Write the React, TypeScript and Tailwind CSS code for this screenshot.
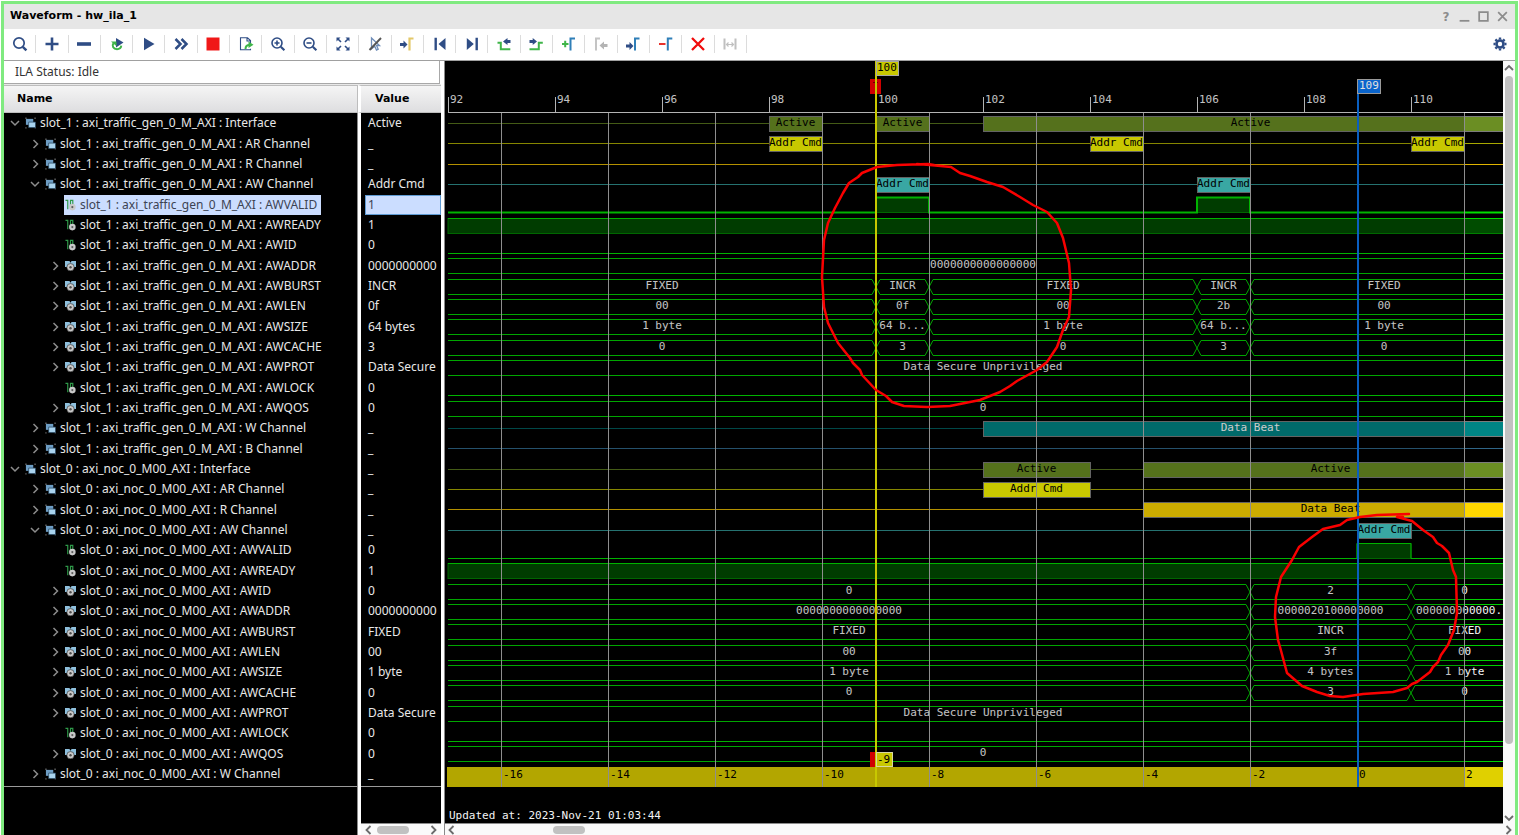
import { ReactNode } from 'react';
import clsx from 'clsx';

type RowKind = 'group' | 'bit' | 'bus';

interface SignalRow {
  name: string;
  value: string;
  kind: RowKind;
  level: 0 | 1 | 2;
  open?: boolean;
  selected?: boolean;
}

const S1 = 'slot_1 : axi_traffic_gen_0_M_AXI : ';
const S0 = 'slot_0 : axi_noc_0_M00_AXI : ';

const ROWS: SignalRow[] = [
  { name: S1 + 'Interface', value: 'Active', kind: 'group', level: 0, open: true },
  { name: S1 + 'AR Channel', value: '_', kind: 'group', level: 1 },
  { name: S1 + 'R Channel', value: '_', kind: 'group', level: 1 },
  { name: S1 + 'AW Channel', value: 'Addr Cmd', kind: 'group', level: 1, open: true },
  { name: S1 + 'AWVALID', value: '1', kind: 'bit', level: 2, selected: true },
  { name: S1 + 'AWREADY', value: '1', kind: 'bit', level: 2 },
  { name: S1 + 'AWID', value: '0', kind: 'bit', level: 2 },
  { name: S1 + 'AWADDR', value: '0000000000', kind: 'bus', level: 2 },
  { name: S1 + 'AWBURST', value: 'INCR', kind: 'bus', level: 2 },
  { name: S1 + 'AWLEN', value: '0f', kind: 'bus', level: 2 },
  { name: S1 + 'AWSIZE', value: '64 bytes', kind: 'bus', level: 2 },
  { name: S1 + 'AWCACHE', value: '3', kind: 'bus', level: 2 },
  { name: S1 + 'AWPROT', value: 'Data Secure', kind: 'bus', level: 2 },
  { name: S1 + 'AWLOCK', value: '0', kind: 'bit', level: 2 },
  { name: S1 + 'AWQOS', value: '0', kind: 'bus', level: 2 },
  { name: S1 + 'W Channel', value: '_', kind: 'group', level: 1 },
  { name: S1 + 'B Channel', value: '_', kind: 'group', level: 1 },
  { name: S0 + 'Interface', value: '_', kind: 'group', level: 0, open: true },
  { name: S0 + 'AR Channel', value: '_', kind: 'group', level: 1 },
  { name: S0 + 'R Channel', value: '_', kind: 'group', level: 1 },
  { name: S0 + 'AW Channel', value: '_', kind: 'group', level: 1, open: true },
  { name: S0 + 'AWVALID', value: '0', kind: 'bit', level: 2 },
  { name: S0 + 'AWREADY', value: '1', kind: 'bit', level: 2 },
  { name: S0 + 'AWID', value: '0', kind: 'bus', level: 2 },
  { name: S0 + 'AWADDR', value: '0000000000', kind: 'bus', level: 2 },
  { name: S0 + 'AWBURST', value: 'FIXED', kind: 'bus', level: 2 },
  { name: S0 + 'AWLEN', value: '00', kind: 'bus', level: 2 },
  { name: S0 + 'AWSIZE', value: '1 byte', kind: 'bus', level: 2 },
  { name: S0 + 'AWCACHE', value: '0', kind: 'bus', level: 2 },
  { name: S0 + 'AWPROT', value: 'Data Secure', kind: 'bus', level: 2 },
  { name: S0 + 'AWLOCK', value: '0', kind: 'bit', level: 2 },
  { name: S0 + 'AWQOS', value: '0', kind: 'bus', level: 2 },
  { name: S0 + 'W Channel', value: '_', kind: 'group', level: 1 },
];

const NAVY = '#2f4d85';
const GREEN = '#3fb549';
const BLUE = '#2f7fb8';

const TOOLS: { label: string; icon: ReactNode }[] = [
  {
    label: 'Search',
    icon: (
      <g fill="none" stroke={NAVY} strokeWidth="1.7">
        <circle cx="7" cy="7" r="5.2" />
        <path d="M10.8 10.8l3.6 3.6" strokeWidth="2.4" />
      </g>
    ),
  },
  { label: 'Add', icon: <path d="M8 1.5v13M1.5 8h13" stroke={NAVY} strokeWidth="2.6" /> },
  { label: 'Remove', icon: <path d="M1 8h14" stroke={NAVY} strokeWidth="3.6" /> },
  {
    label: 'Restart trigger',
    icon: (
      <g>
        <path d="M7 2v9.500l7.500-5z" fill={NAVY} />
        <path d="M4.500 7C2.500 10 4.500 13.200 8 13.200c2.600 0 4-1.500 4.300-3.500" fill="none" stroke={GREEN} strokeWidth="2" />
        <path d="M2 5.500h5.500v4.800z" fill={GREEN} />
      </g>
    ),
  },
  { label: 'Run trigger', icon: <path d="M3 1.8v12.400l10.500-6.200z" fill={NAVY} /> },
  {
    label: 'Run trigger immediate',
    icon: <path d="M2.500 3l5 5-5 5M8.500 3l5 5-5 5" fill="none" stroke={NAVY} strokeWidth="2.5" />,
  },
  { label: 'Stop trigger', icon: <path d="M1.500 1.500h13v13h-13z" fill="#f01818" /> },
  {
    label: 'Export data',
    icon: (
      <g fill="none">
        <path d="M12.500 7V4.500L9.500 1.800h-7v12h10v-1M9 2v3h3.500" stroke={NAVY} strokeWidth="1.1" />
        <path d="M7.500 13c0-3 1.500-4 4-4" stroke={GREEN} strokeWidth="2" />
        <path d="M10.500 5.500v6.500l5-3.200z" fill={GREEN} />
      </g>
    ),
  },
  {
    label: 'Zoom in',
    icon: (
      <g fill="none" stroke={NAVY} strokeWidth="1.6">
        <circle cx="7" cy="7" r="5" />
        <path d="M10.800 10.800l3.600 3.400" strokeWidth="2.2" />
        <path d="M4.500 7h5M7 4.500v5" />
      </g>
    ),
  },
  {
    label: 'Zoom out',
    icon: (
      <g fill="none" stroke={NAVY} strokeWidth="1.6">
        <circle cx="7" cy="7" r="5" />
        <path d="M10.800 10.800l3.600 3.400" strokeWidth="2.2" />
        <path d="M4.500 7h5" />
      </g>
    ),
  },
  {
    label: 'Zoom fit',
    icon: (
      <g fill={NAVY} stroke={NAVY} strokeWidth="1.6">
        <path d="M3 3l3 3M13 3l-3 3M3 13l3-3M13 13l-3-3" />
        <path d="M1.500 1.500h4l-4 4zM14.500 1.500h-4l4 4zM1.500 14.500h4l-4-4zM14.500 14.500h-4l4-4z" stroke="none" />
      </g>
    ),
  },
  {
    label: 'Zoom to cursor',
    icon: (
      <g fill="none">
        <path d="M4.500 2l8 7.500H9.500l1.700 3.800-1.700.8-1.800-3.900-3.200 2.600z" stroke="#6f8db8" strokeWidth="1.3" />
        <path d="M14 2L2.500 14" stroke="#555" strokeWidth="1.9" />
      </g>
    ),
  },
  {
    label: 'Go to cursor',
    icon: (
      <g>
        <path d="M1 7h3.500V4.500l4 4-4 4V10H1z" fill={NAVY} />
        <path d="M10.500 14.500v-12h4" fill="none" stroke="#e3c869" strokeWidth="2.2" />
      </g>
    ),
  },
  {
    label: 'Go to time 0',
    icon: <path d="M2.500 1.800h2.400v12.400H2.500zM13.500 2v12L6.500 8z" fill={NAVY} />,
  },
  {
    label: 'Go to last time',
    icon: <path d="M11.500 1.800h2.400v12.400h-2.400zM2.800 2v12l7-6z" fill={NAVY} />,
  },
  {
    label: 'Previous transition',
    icon: (
      <g>
        <path d="M1.500 6.800h3.300v6.500h9.500" fill="none" stroke={GREEN} strokeWidth="2" />
        <path d="M14.500 4h-3V2L7 5.500l4.500 3.500V7h3z" fill={NAVY} />
      </g>
    ),
  },
  {
    label: 'Next transition',
    icon: (
      <g>
        <path d="M1.500 13.300h9.300V6.800h4" fill="none" stroke={GREEN} strokeWidth="2" />
        <path d="M1.500 4h3.200V2L9 5.500 4.700 9V7H1.500z" fill={NAVY} />
      </g>
    ),
  },
  {
    label: 'Add marker',
    icon: (
      <g fill="none" strokeWidth="2">
        <path d="M1 8h6.500M4.200 4.800v6.400" stroke={GREEN} />
        <path d="M9.500 14.500V2.500h4.500" stroke={BLUE} />
      </g>
    ),
  },
  {
    label: 'Previous marker',
    icon: (
      <g>
        <path d="M3 14.500V2.500h4" fill="none" stroke="#c4c4c4" strokeWidth="2" />
        <path d="M14.500 8h-3.500V5.500l-4.500 4 4.500 4V11h3.500z" fill="#b4b4b4" />
      </g>
    ),
  },
  {
    label: 'Next marker',
    icon: (
      <g>
        <path d="M1 8.500h3.500V6l4 4-4 4v-2.500H1z" fill={NAVY} />
        <path d="M10 14.500v-12h4.500" fill="none" stroke={BLUE} strokeWidth="2" />
      </g>
    ),
  },
  {
    label: 'Delete marker',
    icon: (
      <g fill="none" strokeWidth="2">
        <path d="M1 8h6.500" stroke="#e8322c" />
        <path d="M9.800 14.500V2.500h4.500" stroke={BLUE} />
      </g>
    ),
  },
  {
    label: 'Delete all markers',
    icon: <path d="M2 2l12 12M14 2L2 14" stroke="#f00b0b" strokeWidth="2.3" />,
  },
  {
    label: 'Swap cursors',
    icon: (
      <g fill="none" stroke="#c0c0c0">
        <path d="M2.500 2.500v11M13.500 2.500v11" strokeWidth="2" />
        <path d="M4.500 8.500h7M6.500 6.500l-2 2 2 2M9.500 6.500l2 2-2 2" strokeWidth="1.2" />
      </g>
    ),
  },
];

const Arrow = ({ d }: { d: string }) => (
  <svg viewBox="0 0 12 12" className="size-3 shrink-0" fill="none" stroke="#6b6b6b" strokeWidth="1.8">
    <path d={d} />
  </svg>
);

const LEFT = 'M8.500 2L4.500 6 8.500 10';
const RIGHT = 'M3.500 2L7.500 6 3.500 10';
const UP = 'M2 8L6 4 10 8';
const DOWN = 'M2 4L6 8 10 4';

const RowIcon = ({ kind }: { kind: RowKind }) => (
  <svg viewBox="0 0 12 12" className="h-3 w-[11px] shrink-0">
    {kind === 'group' && (
      <g>
        <path d="M0 0h2v1.500H0zM10 0h2v1.500h-2zM0 10.500h2V12H0zM10.500 10.500H12V12h-1.500z" fill="#4b4b4b" />
        <path d="M1 1.500h8v6.500H1z" fill="#6d9dc4" />
        <path d="M4 5h7.500v6H4z" fill="#a9d3ee" stroke="#27455e" strokeWidth=".8" />
      </g>
    )}
    {kind === 'bit' && (
      <g>
        <path d="M.5 1h2.500v9.500M6 8V1h2.500v4" fill="none" stroke="#2f9a49" strokeWidth="1.3" />
        <circle cx="8" cy="8.300" r="3.600" fill="#c9c9c9" />
        <circle cx="8" cy="8.300" r="1.200" fill="#5d5d5d" />
      </g>
    )}
    {kind === 'bus' && (
      <g>
        <path d="M0 .5h4.800L6 2.500 7.200 .5H12v6.500H0z" fill="#8fc0dd" />
        <circle cx="6" cy="7.300" r="4" fill="#c9c9c9" stroke="#1b1b1b" strokeWidth=".6" />
        <circle cx="6" cy="7.300" r="1.300" fill="#4f4f4f" />
      </g>
    )}
  </svg>
);

const INDENT = ['pl-1.5', 'pl-[26px]', 'pl-[46px]'];

const SignalTable = () => (
  <table className="w-full table-fixed border-separate border-spacing-0 bg-black text-xs text-[#e8e8e8]">
    <colgroup>
      <col />
      <col className="w-[83px]" />
    </colgroup>
    <thead>
      <tr className="h-7 text-left font-['DejaVu_Sans'] text-[11px] text-black">
        <th className="border-t border-r border-b border-[#bdbdbd] bg-linear-to-b from-[#f5f5f5] to-[#dedee0] p-0 pl-[13px]">
          Name
        </th>
        <th className="border-t border-b border-l-[3px] border-t-[#bdbdbd] border-b-[#bdbdbd] border-l-white bg-linear-to-b from-[#f5f5f5] to-[#dedee0] bg-clip-padding p-0 pl-3.5">
          Value
        </th>
      </tr>
    </thead>
    <tbody>
      {ROWS.map((row, i) => (
        <tr key={row.name} className={i % 3 === 1 ? 'h-[21px]' : 'h-5'}>
          <td className="overflow-hidden border-r border-[#8a8a8a] p-0">
            <div className={clsx('flex h-5 items-center whitespace-nowrap', INDENT[row.level])}>
              {row.kind === 'bit' ? (
                <span className="w-3.5" />
              ) : (
                <button type="button" aria-label={row.open ? 'Collapse' : 'Expand'} className="w-3.5">
                  <svg viewBox="0 0 10 10" className="size-2.5" fill="none" stroke="#8d8d8d" strokeWidth="1.5">
                    <path d={row.open ? 'M1 3l4 4 4-4' : 'M3.500 1l4 4-4 4'} />
                  </svg>
                </button>
              )}
              <span
                className={clsx('flex h-5 items-center gap-1 pl-px', row.selected && 'bg-[#cbddff] pr-1 text-[#3c4353]')}
              >
                <RowIcon kind={row.kind} />
                {row.name}
              </span>
            </div>
          </td>
          <td className="border-l-[3px] border-white p-0">
            <div
              className={clsx(
                'ml-1 flex h-5 items-center overflow-hidden border whitespace-nowrap pl-0.5',
                row.selected ? 'border-[#5f9bd3] bg-[#cbddff] text-[#3c4353]' : 'border-transparent',
              )}
            >
              {row.value}
            </div>
          </td>
        </tr>
      ))}
    </tbody>
  </table>
);

// ---- waveform ----

const CYCLE = 53.5;
const FIRST = 92;
const LAST = 112;
const FAR = 4000;
const DIM_END = 111;
const RULER_Y = 51;
const CHAR_W = 6.62;

const px = (n: number) => Math.floor(3 + (n - FIRST) * CYCLE);
const endPx = (n: number) => (n >= LAST ? FAR : px(n));
const rowTop = (i: number) => 52 + 20 * i + Math.floor((i + 1) / 3);

const labelX = (from: number, to: number, label: string) =>
  to >= LAST ? Math.min((px(from) + px(to)) / 2, 1057 - (label.length > 12 && from > 100 ? 43 : 0)) : (px(from) + px(to)) / 2;

type Segment = [from: number, to: number, label: string];

const IDLE: { row: number; color: string }[] = [
  { row: 0, color: '#56721c' },
  { row: 1, color: '#a8a800' },
  { row: 2, color: '#e0b400' },
  { row: 3, color: '#2f8f8c' },
  { row: 15, color: '#005a5a' },
  { row: 16, color: '#2f6688' },
  { row: 17, color: '#56721c' },
  { row: 18, color: '#a8a800' },
  { row: 19, color: '#e0b400' },
  { row: 20, color: '#2f8f8c' },
];

const BARS: { row: number; fill: string; text: string; segs: Segment[] }[] = [
  { row: 0, fill: '#6b8e23', text: '#000', segs: [[98, 99, 'Active'], [100, 101, 'Active'], [102, 112, 'Active']] },
  { row: 1, fill: '#fafa00', text: '#000', segs: [[98, 99, 'Addr Cmd'], [104, 105, 'Addr Cmd'], [110, 111, 'Addr Cmd']] },
  { row: 3, fill: '#48d1cc', text: '#000', segs: [[100, 101, 'Addr Cmd'], [106, 107, 'Addr Cmd']] },
  { row: 15, fill: '#008585', text: '#fff', segs: [[102, 112, 'Data Beat']] },
  { row: 17, fill: '#6b8e23', text: '#000', segs: [[102, 104, 'Active'], [105, 112, 'Active']] },
  { row: 18, fill: '#fafa00', text: '#000', segs: [[102, 104, 'Addr Cmd']] },
  { row: 19, fill: '#ffd700', text: '#000', segs: [[105, 112, 'Data Beat']] },
  { row: 20, fill: '#48d1cc', text: '#000', segs: [[109, 110, 'Addr Cmd']] },
];

const BUSES: { row: number; segs: Segment[] }[] = [
  { row: 7, segs: [[92, 112, '0000000000000000']] },
  { row: 8, segs: [[92, 100, 'FIXED'], [100, 101, 'INCR'], [101, 106, 'FIXED'], [106, 107, 'INCR'], [107, 112, 'FIXED']] },
  { row: 9, segs: [[92, 100, '00'], [100, 101, '0f'], [101, 106, '00'], [106, 107, '2b'], [107, 112, '00']] },
  {
    row: 10,
    segs: [[92, 100, '1 byte'], [100, 101, '64 b...'], [101, 106, '1 byte'], [106, 107, '64 b...'], [107, 112, '1 byte']],
  },
  { row: 11, segs: [[92, 100, '0'], [100, 101, '3'], [101, 106, '0'], [106, 107, '3'], [107, 112, '0']] },
  { row: 12, segs: [[92, 112, 'Data Secure Unprivileged']] },
  { row: 14, segs: [[92, 112, '0']] },
  { row: 23, segs: [[92, 107, '0'], [107, 110, '2'], [110, 112, '0']] },
  { row: 24, segs: [[92, 107, '0000000000000000'], [107, 110, '0000020100000000'], [110, 112, '000000000000.']] },
  { row: 25, segs: [[92, 107, 'FIXED'], [107, 110, 'INCR'], [110, 112, 'FIXED']] },
  { row: 26, segs: [[92, 107, '00'], [107, 110, '3f'], [110, 112, '00']] },
  { row: 27, segs: [[92, 107, '1 byte'], [107, 110, '4 bytes'], [110, 112, '1 byte']] },
  { row: 28, segs: [[92, 107, '0'], [107, 110, '3'], [110, 112, '0']] },
  { row: 29, segs: [[92, 112, 'Data Secure Unprivileged']] },
  { row: 31, segs: [[92, 112, '0']] },
];

const BITS: { row: number; width: number; high: [number, number][] }[] = [
  { row: 4, width: 2, high: [[100, 101], [106, 107]] },
  { row: 5, width: 1, high: [[92, 112]] },
  { row: 6, width: 1, high: [] },
  { row: 13, width: 1, high: [] },
  { row: 21, width: 1, high: [[109, 110]] },
  { row: 22, width: 1, high: [[92, 112]] },
  { row: 30, width: 1, high: [] },
];

const range = (from: number, to: number) =>
  Array.from({ length: (to - from) / 2 + 1 }, (_, i) => from + i * 2);

const Bus = ({ row, segs }: { row: number; segs: Segment[] }) => {
  const top = rowTop(row) + 3.5;
  const low = top + 15;
  return (
    <g>
      {segs.map(([from, to, label], i) => {
        const a = px(from) + (i > 0 ? 4 : 0);
        const b = to >= LAST ? FAR : px(to) - 4;
        return (
          <g key={from}>
            <path d={`M${a} ${top}H${b}M${a} ${low}H${b}`} stroke="#00d000" />
            {i > 0 && (
              <path d={`M${a} ${top}L${a - 8} ${low}M${a - 8} ${top}L${a} ${low}`} stroke="#00d000" />
            )}
            <text x={labelX(from, to, label)} y={top + 9} textAnchor="middle" fill="#f4f4f4">
              {label}
            </text>
          </g>
        );
      })}
    </g>
  );
};

const Bit = ({ row, width, high }: { row: number; width: number; high: [number, number][] }) => {
  const top = rowTop(row) + 3.5;
  const low = top + 15;
  const edges = high.map(([a, b]) => `H${px(a)}V${top}H${endPx(b)}V${low}`).join('');
  return (
    <g>
      {high.map(([a, b]) => (
        <rect key={a} x={px(a)} y={top} width={endPx(b) - px(a)} height={15} fill="#004c00" stroke="#008000" />
      ))}
      <path
        d={high[0]?.[0] === FIRST ? `M3 ${top}H${FAR}` : `M3 ${low}${edges}H${FAR}`}
        fill="none"
        stroke="#00e000"
        strokeWidth={width}
      />
    </g>
  );
};

const Waveform = () => (
  <svg
    role="img"
    aria-label="Captured waveform"
    className="h-full w-full bg-black font-['DejaVu_Sans_Mono',monospace] text-[11px]"
  >
    {range(92, 110).map((n) => (
      <g key={n}>
        <path d={`M${px(n) + 0.5} ${RULER_Y - 15}v15`} stroke="#e0e0e0" />
        <text x={px(n) + 2} y={RULER_Y - 9} fill="#f4f4f4">
          {n}
        </text>
      </g>
    ))}
    <path d={`M3 ${RULER_Y + 0.5}H${FAR}`} stroke="#e0e0e0" />

    {IDLE.map(({ row, color }) => (
      <path key={row} d={`M3 ${rowTop(row) + 10.5}H${FAR}`} stroke={color} />
    ))}
    {BITS.map((bit) => (
      <Bit key={bit.row} {...bit} />
    ))}
    {BUSES.map((bus) => (
      <Bus key={bus.row} {...bus} />
    ))}
    {BARS.map(({ row, fill, text, segs }) =>
      segs.map(([from, to, label]) => (
        <g key={`${row}-${from}`}>
          <rect
            x={px(from) + 0.5}
            y={rowTop(row) + 3.5}
            width={endPx(to) - px(from)}
            height={15}
            fill={fill}
            stroke="#7c7c7c"
          />
          <text x={(px(from) + px(to)) / 2} y={rowTop(row) + 13} textAnchor="middle" fill={text}>
            {label}
          </text>
        </g>
      )),
    )}

    {/* ruler relative to the trigger */}
    <rect x="2" y="706" width={FAR} height="20" fill="#e0d000" />

    {/* samples before the window end are shown dimmed */}
    <rect x="0" y="0" width={px(DIM_END)} height="726" fill="#000" opacity="0.2" />

    {range(-16, 2).map((n) => (
      <g key={n}>
        <path d={`M${px(n + 109) + 0.5} ${RULER_Y + 1}V726`} stroke="#8e8e8e" />
        <text x={px(n + 109) + 2} y="717" fill="#000">
          {n}
        </text>
      </g>
    ))}

    {/* trigger flags */}
    <path d="M425 18h11v15h-11zM425 691h6v15h-6z" fill="#d00000" />
    <path d="M428 21.500h5" stroke="#600" />
    <path d="M431 0V726" stroke="#c8c800" strokeWidth="2" />
    <rect x="431.5" y="0.5" width="22" height="14" fill="#c8c800" stroke="#a8a8a8" />
    <text x="432" y="10" fill="#000">
      100
    </text>
    <rect x="431.5" y="691.5" width="16" height="14" fill="#c8c800" stroke="#d8d8a0" />
    <text x="432" y="702" fill="#000">
      -9
    </text>
    <path d="M913 18V726" stroke="#0a5fc0" strokeWidth="2" />
    <rect x="912.5" y="18.5" width="23" height="14" fill="#0a64cc" stroke="#9a9a9a" />
    <text x="914" y="28" fill="#e0e0e0">
      109
    </text>

    <text x="4" y="758" fill="#f4f4f4">
      Updated at: 2023-Nov-21 01:03:44
    </text>

    {/* hand-drawn review marks */}
    <g
      transform="translate(-445 -61)"
      fill="none"
      stroke="#fa0000"
      strokeWidth="2.5"
      strokeLinejoin="round"
      strokeLinecap="round"
    >
      <path d="M934 165L928 164 897 165 877 167 862 173 858 177 849 183 843 193 835 208 828 223 824 240 822 277 824 307 828 323 838 343 850 358 853 363 860 370 862 375 876 390 886 396 892 402 904 406 927 407 950 406 980 400 1000 392 1010 386 1017 381 1037 370 1047 362 1057 347 1063 330 1069 317 1071 290 1069 263 1063 238 1057 223 1047 212 1033 205 1020 197 1003 187 987 182 970 176 960 173 951 167 930 165 917 164" />
      <path d="M1409 514L1377 515 1360 517 1347 520 1340 525 1323 529 1312 537 1299 547 1292 560 1281 577 1276 597 1275 617 1278 640 1280 647 1287 673 1302 686 1317 692 1330 696 1343 697 1363 694 1393 692 1407 688 1412 684 1417 682 1430 672 1433 667 1438 662 1441 655 1448 645 1454 630 1457 613 1456 577 1453 570 1449 553 1442 546 1437 543 1433 537 1423 530 1412 521 1397 517 1403 517" />
    </g>
  </svg>
);

export default function App() {
  return (
    <div className="h-screen overflow-hidden bg-white px-px pt-px font-['Noto_Sans',sans-serif] text-xs text-black">
      <main className="flex h-full flex-col border-x-[3px] border-t-[3px] border-[#80ea80]">
        <header className="flex h-[25px] shrink-0 items-center justify-between bg-[#e6e6e6] pr-1.5 pl-1.5">
          <h1 className="font-['DejaVu_Sans'] text-[11px] font-bold">Waveform - hw_ila_1</h1>
          <div className="flex gap-1.5 text-[#8c8c8c]">
            <button type="button" aria-label="Help" className="w-3 font-['DejaVu_Sans'] text-xs font-bold">
              ?
            </button>
            {[
              ['Minimize', 'M1.500 10h9'],
              ['Maximize', 'M2 2h8v8H2z'],
              ['Close', 'M2 2l8 8M10 2l-8 8'],
            ].map(([label, d]) => (
              <button key={label} type="button" aria-label={label}>
                <svg viewBox="0 0 12 12" className="size-[13px]" fill="none" stroke="currentColor" strokeWidth="1.6">
                  <path d={d} />
                </svg>
              </button>
            ))}
          </div>
        </header>

        <div className="flex h-8 shrink-0 items-center justify-between border-b border-[#a0a0a0] pr-2 pb-0.5">
          <div className="flex w-[743px]">
            {TOOLS.map(({ label, icon }) => (
              <button
                key={label}
                type="button"
                aria-label={label}
                className="flex h-[18px] flex-1 items-center justify-center border-r border-[#dcdcdc]"
              >
                <svg viewBox="0 0 16 16" className="size-4">
                  {icon}
                </svg>
              </button>
            ))}
          </div>
          <button type="button" aria-label="Settings">
            <svg viewBox="0 0 14 14" className="size-3.5" fill="none" stroke={NAVY}>
              <circle cx="7" cy="7" r="3.5" strokeWidth="2.6" />
              <path
                d="M7 .5v2M7 11.500v2M.5 7h2M11.500 7h2M2.400 2.400l1.400 1.400M10.200 10.200l1.400 1.400M2.400 11.600l1.400-1.400M10.200 3.800l1.400-1.400"
                strokeWidth="2.4"
              />
            </svg>
          </button>
        </div>

        <div className="flex min-h-0 flex-1">
          <div className="flex w-[437px] shrink-0 flex-col">
            <div className="mr-px flex h-[23px] shrink-0 items-center border-r border-b border-[#a8a8a8] pl-[11px] text-[#333]">
              ILA Status: Idle
            </div>
            <div className="h-px shrink-0 bg-[#e8e8e8]" />
            <SignalTable />
            <div className="flex min-h-0 flex-1">
              <div className="flex-1 border-r border-[#8a8a8a] bg-black pt-0.5">
                <div className="h-px bg-[#9a9a9a]" />
              </div>
              <div className="ml-[3px] flex w-20 flex-col bg-black pt-0.5">
                <div className="h-px bg-[#9a9a9a]" />
                <div className="flex-1" />
                <div className="flex h-3 items-center justify-between border-t border-[#8a8a8a] bg-[#fafafa] px-px">
                  <Arrow d={LEFT} />
                  <div className="mr-4 h-2 w-8 rounded-full bg-[#c1c1c1]" />
                  <Arrow d={RIGHT} />
                </div>
              </div>
            </div>
          </div>

          <div className="ml-[3px] flex min-w-0 flex-1 flex-col border-l border-[#8a8a8a]">
            <div className="flex min-h-0 flex-1">
              <div className="min-w-0 flex-1 overflow-hidden border-b border-[#8a8a8a]">
                <Waveform />
              </div>
              <div className="flex w-3 flex-col items-center bg-[#fafafa] pt-px">
                <Arrow d={UP} />
                <div className="mt-0.5 h-[668px] w-2 rounded-full bg-[#c1c1c1]" />
                <div className="flex-1" />
                <Arrow d={DOWN} />
              </div>
            </div>
            <div className="flex h-[11px] shrink-0 items-center bg-[#fafafa]">
              <Arrow d={LEFT} />
              <div className="ml-24 h-2 w-8 rounded-full bg-[#c1c1c1]" />
              <div className="flex-1" />
              <Arrow d={RIGHT} />
            </div>
          </div>
        </div>
      </main>
    </div>
  );
}
